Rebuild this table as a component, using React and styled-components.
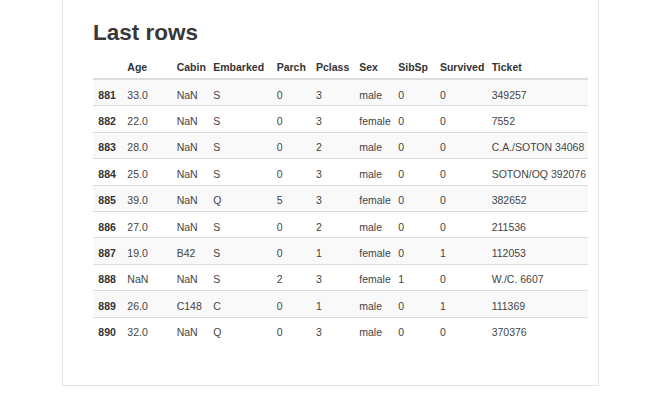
import styled, { createGlobalStyle } from "styled-components";

const GlobalStyle = createGlobalStyle`
  body {
    margin: 0;
    background: #ffffff;
    font-family: "Liberation Sans", Arial, Helvetica, sans-serif;
    color: #333333;
  }
`;

const Page = styled.div`
  width: 664px;
  height: 396px;
  overflow: hidden;
`;

const Card = styled.div`
  box-sizing: border-box;
  width: 537px;
  margin-left: 62px;
  padding: 20.5px 10px 42px 30px;
  border: 1px solid #e4e4e4;
  border-top: none;
  background: #ffffff;
`;

const Title = styled.h2`
  margin: 0 0 10.75px 0;
  font-size: 22.5px;
  line-height: 24.75px;
  font-weight: bold;
  color: #383838;
`;

const Table = styled.table`
  width: 495px;
  table-layout: fixed;
  border-collapse: collapse;
  font-size: 10.5px;
  line-height: 15px;
  margin-left: 0.3px;
`;

const Col = styled.col`
  width: ${(p) => p.$w}px;
`;

const Th = styled.th`
  text-align: left;
  font-weight: bold;
  padding: 3.5px 5px;
  border-bottom: 2px solid #dddddd;
  white-space: nowrap;
  color: #333333;
`;

const Row = styled.tr`
  background: ${(p) => (p.$striped ? "#f9f9f9" : "transparent")};
`;

const Td = styled.td`
  text-align: left;
  padding: 7.6px 5px 2.8px;
  border-top: 1px solid #dddddd;
  white-space: nowrap;
  font-weight: ${(p) => (p.$index ? "bold" : "normal")};
  color: ${(p) => (p.$index ? "#333333" : "#444444")};
`;

const columns = [
  { name: "", w: 29 },
  { name: "Age", w: 49.4 },
  { name: "Cabin", w: 36.6 },
  { name: "Embarked", w: 63.4 },
  { name: "Parch", w: 39.3 },
  { name: "Pclass", w: 43.3 },
  { name: "Sex", w: 39 },
  { name: "SibSp", w: 41.7 },
  { name: "Survived", w: 51.7 },
  { name: "Ticket", w: 101.6 },
];

const rows = [
  ["881", "33.0", "NaN", "S", "0", "3", "male", "0", "0", "349257"],
  ["882", "22.0", "NaN", "S", "0", "3", "female", "0", "0", "7552"],
  ["883", "28.0", "NaN", "S", "0", "2", "male", "0", "0", "C.A./SOTON 34068"],
  ["884", "25.0", "NaN", "S", "0", "3", "male", "0", "0", "SOTON/OQ 392076"],
  ["885", "39.0", "NaN", "Q", "5", "3", "female", "0", "0", "382652"],
  ["886", "27.0", "NaN", "S", "0", "2", "male", "0", "0", "211536"],
  ["887", "19.0", "B42", "S", "0", "1", "female", "0", "1", "112053"],
  ["888", "NaN", "NaN", "S", "2", "3", "female", "1", "0", "W./C. 6607"],
  ["889", "26.0", "C148", "C", "0", "1", "male", "0", "1", "111369"],
  ["890", "32.0", "NaN", "Q", "0", "3", "male", "0", "0", "370376"],
];

export default function App() {
  return (
    <Page>
      <GlobalStyle />
      <Card>
        <Title>Last rows</Title>
        <Table>
          <colgroup>
            {columns.map((c, i) => (
              <Col key={i} $w={c.w} />
            ))}
          </colgroup>
          <thead>
            <tr>
              {columns.map((c, i) => (
                <Th key={i}>{c.name}</Th>
              ))}
            </tr>
          </thead>
          <tbody>
            {rows.map((r, i) => (
              <Row key={r[0]} $striped={i % 2 === 0}>
                {r.map((v, j) => (
                  <Td key={j} $index={j === 0}>
                    {v}
                  </Td>
                ))}
              </Row>
            ))}
          </tbody>
        </Table>
      </Card>
    </Page>
  );
}
